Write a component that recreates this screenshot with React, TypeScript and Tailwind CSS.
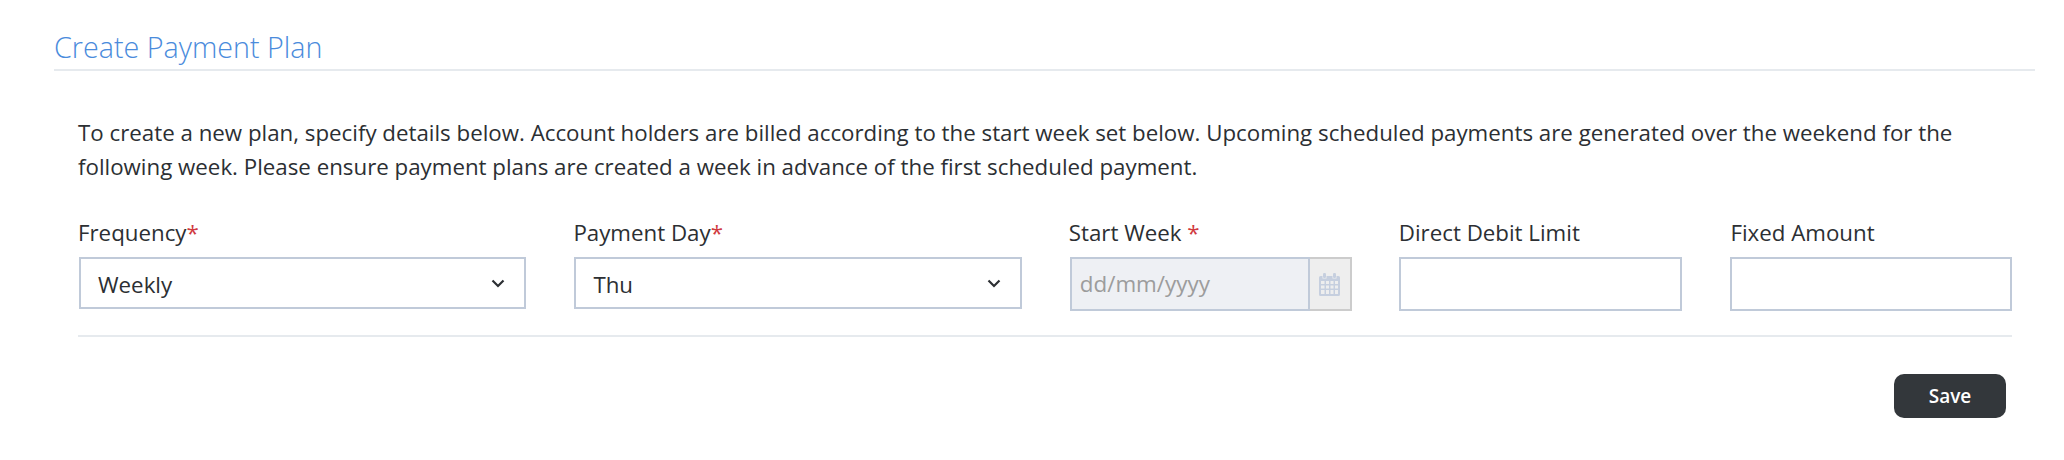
const font = { fontFamily: '"Open Sans", "Noto Sans", sans-serif' };

function Label({ text, gap }: { text: string; gap?: boolean }) {
  return (
    <label className="-ml-[1px] block h-[41px] pt-[2px] text-[22.3px] leading-[30px] text-[#2c2f33]">
      {text}
      {gap ? " " : ""}
      {gap !== undefined && <span className="text-[#d0393e]">*</span>}
    </label>
  );
}

function SelectBox({ value }: { value: string }) {
  return (
    <div className="flex h-[52px] items-center justify-between border-2 border-[#c0cad9] bg-white pl-[17px] pr-[19px] text-[22.3px] text-[#2c2f33]">
      <span className="pt-[3px]">{value}</span>
      <svg width="14" height="9" viewBox="0 0 14 9" fill="none" stroke="#2c2f33" strokeWidth="2.2">
        <path d="M1.5 1.5 7 7l5.5-5.5" />
      </svg>
    </div>
  );
}

function CalendarIcon() {
  return (
    <svg width="21" height="23" viewBox="0 0 21 23" fill="#c6cfdf">
      <rect x="4" y="0" width="3" height="5" rx="1.2" />
      <rect x="14" y="0" width="3" height="5" rx="1.2" />
      <path
        fillRule="evenodd"
        d="M1.5 3H3.5V5.5H7.5V3H13.5V5.5H17.5V3H19.5A1.5 1.5 0 0 1 21 4.5V21.5A1.5 1.5 0 0 1 19.5 23H1.5A1.5 1.5 0 0 1 0 21.5V4.5A1.5 1.5 0 0 1 1.5 3ZM2 8V11H5.5V8ZM7 8V11H10V8ZM11.5 8V11H14.5V8ZM16 8V11H19V8ZM2 12.5V15.5H5.5V12.5ZM7 12.5V15.5H10V12.5ZM11.5 12.5V15.5H14.5V12.5ZM16 12.5V15.5H19V12.5ZM2 17V21H5.5V17ZM7 17V21H10V17ZM11.5 17V21H14.5V17ZM16 17V21H19V17Z"
      />
    </svg>
  );
}

export default function App() {
  return (
    <div className="h-[460px] w-[2064px] overflow-hidden bg-white" style={font}>
      <div className="ml-[54px] mr-[29px] h-[71px] border-b-2 border-[#e6eaee] pt-[29px]">
        <h2 className="text-[28.7px] font-light leading-[36px] text-[#4a8bdc]">Create Payment Plan</h2>
      </div>

      <div className="ml-[78px] w-[1934px]">
        <p className="mt-[45px] text-[22.3px] leading-[34px] text-[#2c2f33]">
          To create a new plan, specify details below. Account holders are billed according to the start week set below. Upcoming scheduled payments are generated over the weekend for the following week. Please ensure payment plans are created a week in advance of the first scheduled payment.
        </p>

        <div className="mt-[32px] flex gap-[48px] pl-[1px]">
          <div className="w-[448px]">
            <Label text="Frequency" gap={false} />
            <SelectBox value="Weekly" />
          </div>
          <div className="w-[448px]">
            <Label text="Payment Day" gap={false} />
            <SelectBox value="Thu" />
          </div>
          <div className="w-[282px]">
            <Label text="Start Week" gap={true} />
            <div className="flex h-[54px]">
              <input
                disabled
                placeholder="dd/mm/yyyy"
                className="w-[240px] border-2 border-[#c0cad9] bg-[#eef0f4] pl-[8px] text-[22.4px] placeholder:text-[#9c9c9c]"
              />
              <div className="flex w-[42px] items-center justify-center border-y-2 border-r-2 border-[#cccccc] bg-[#eeeeee]">
                <CalendarIcon />
              </div>
            </div>
          </div>
          <div className="-ml-[1px] w-[284px]">
            <label className="block h-[41px] pt-[2px] text-[22.3px] leading-[30px] text-[#2c2f33]">Direct Debit Limit</label>
            <input className="block h-[54px] w-full border-2 border-[#c0cad9] bg-white" />
          </div>
          <div className="w-[282px]">
            <label className="block h-[41px] pt-[2px] text-[22.3px] leading-[30px] text-[#2c2f33]">Fixed Amount</label>
            <input className="block h-[54px] w-full border-2 border-[#c0cad9] bg-white" />
          </div>
        </div>

        <div className="mt-[24px] h-[2px] bg-[#e6eaee]" />

        <div className="mt-[37px] flex justify-end pr-[6px]">
          <button className="h-[44px] w-[112px] rounded-[10px] bg-[#33373b] text-[19px] font-semibold text-white">
            Save
          </button>
        </div>
      </div>
    </div>
  );
}
